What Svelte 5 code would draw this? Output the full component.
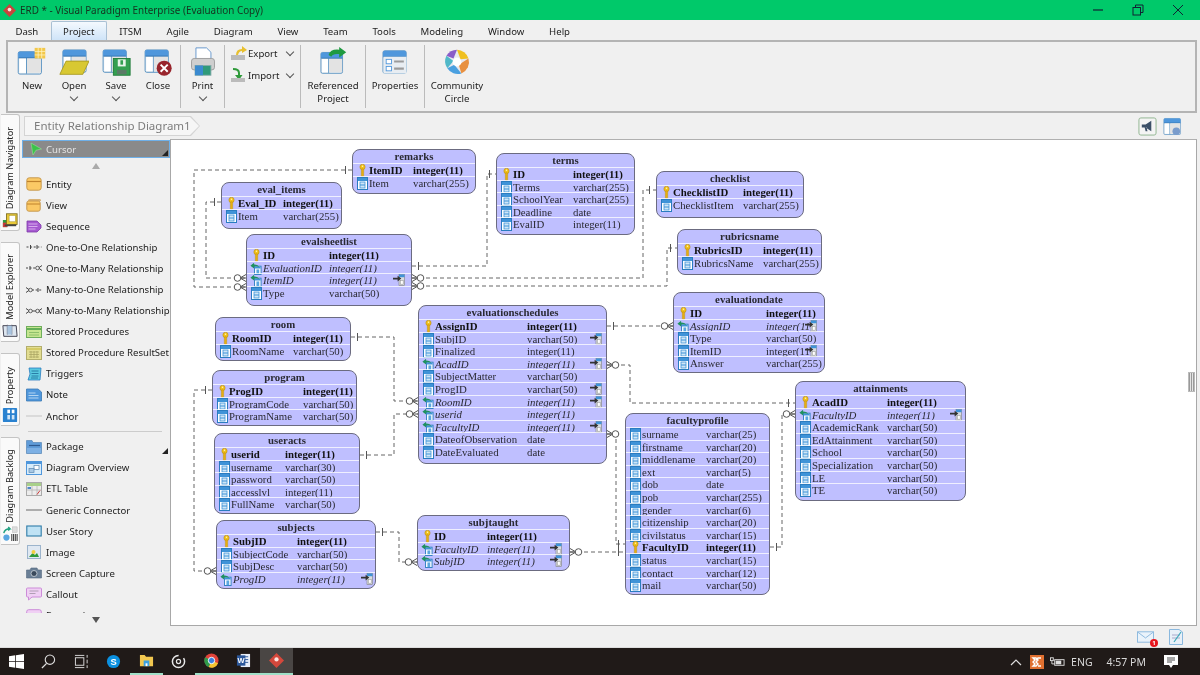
<script>
  const tabs = ['Dash','Project','ITSM','Agile','Diagram','View','Team','Tools','Modeling','Window','Help'];
  const P='k', F='f', C='c';
  const entities = [
    {n:'remarks',x:352,y:149,w:124,h:45,t:61,rows:[['ItemID','integer(11)',P],['Item','varchar(255)',C]]},
    {n:'eval_items',x:221,y:182,w:121,h:47,t:62,rows:[['Eval_ID','integer(11)',P],['Item','varchar(255)',C]]},
    {n:'evalsheetlist',x:246,y:234,w:166,h:72,t:83,ro:7,rows:[['ID','integer(11)',P],['EvaluationID','integer(11)',F],['ItemID','integer(11)',F,1],['Type','varchar(50)',C]]},
    {n:'terms',x:496,y:153,w:139,h:82,t:77,rows:[['ID','integer(11)',P],['Terms','varchar(255)',C],['SchoolYear','varchar(255)',C],['Deadline','date',C],['EvalID','integer(11)',C]]},
    {n:'checklist',x:656,y:171,w:148,h:47,t:87,rows:[['ChecklistID','integer(11)',P],['ChecklistItem','varchar(255)',C]]},
    {n:'rubricsname',x:677,y:229,w:145,h:46,t:86,rows:[['RubricsID','integer(11)',P],['RubricsName','varchar(255)',C]]},
    {n:'evaluationdate',x:673,y:292,w:152,h:81,t:93,ro:8,rows:[['ID','integer(11)',P],['AssignID','integer(11)',F,1],['Type','varchar(50)',C],['ItemID','integer(11)',C,1],['Answer','varchar(255)',C]]},
    {n:'evaluationschedules',x:418,y:305,w:189,h:159,t:109,ro:5,rows:[['AssignID','integer(11)',P],['SubjID','varchar(50)',C,1],['Finalized','integer(11)',C],['AcadID','integer(11)',F,1],['SubjectMatter','varchar(50)',C],['ProgID','varchar(50)',C,1],['RoomID','integer(11)',F,1],['userid','integer(11)',F],['FacultyID','integer(11)',F,1],['DateofObservation','date',C],['DateEvaluated','date',C]]},
    {n:'room',x:215,y:317,w:136,h:44,t:78,rows:[['RoomID','integer(11)',P],['RoomName','varchar(50)',C]]},
    {n:'program',x:212,y:370,w:145,h:56,t:91,rows:[['ProgID','integer(11)',P],['ProgramCode','varchar(50)',C],['ProgramName','varchar(50)',C]]},
    {n:'useracts',x:214,y:433,w:146,h:81,t:71,rows:[['userid','integer(11)',P],['username','varchar(30)',C],['password','varchar(50)',C],['accesslvl','integer(11)',C],['FullName','varchar(50)',C]]},
    {n:'subjects',x:216,y:520,w:160,h:69,t:81,ro:3,rows:[['SubjID','integer(11)',P],['SubjectCode','varchar(50)',C],['SubjDesc','varchar(50)',C],['ProgID','integer(11)',F,1]]},
    {n:'subjtaught',x:417,y:515,w:153,h:56,t:70,ro:8,rows:[['ID','integer(11)',P],['FacultyID','integer(11)',F,1],['SubjID','integer(11)',F,1]]},
    {n:'facultyprofile',x:625,y:413,w:145,h:182,t:81,rows:[['surname','varchar(25)',C],['firstname','varchar(20)',C],['middlename','varchar(20)',C],['ext','varchar(5)',C],['dob','date',C],['pob','varchar(255)',C],['gender','varchar(6)',C],['citizenship','varchar(20)',C],['civilstatus','varchar(15)',C],['FacultyID','integer(11)',P],['status','varchar(15)',C],['contact','varchar(12)',C],['mail','varchar(50)',C]]},
    {n:'attainments',x:795,y:381,w:171,h:120,t:92,ro:4,rows:[['AcadID','integer(11)',P],['FacultyID','integer(11)',F,1],['AcademicRank','varchar(50)',C],['EdAttainment','varchar(50)',C],['School','varchar(50)',C],['Specialization','varchar(50)',C],['LE','varchar(50)',C],['TE','varchar(50)',C]]}
  ];
  const links = [
    [[[352,170],[194,170],[194,287],[246,287]],1,'n'],
    [[[221,202],[206,202],[206,278],[246,278]],1,'n'],
    [[[412,266],[487,266],[487,174],[496,174]],1,1],
    [[[412,278],[643,278],[643,190],[656,190]],'n',1],
    [[[412,286],[667,286],[667,248],[677,248]],'n',1],
    [[[607,326],[673,326]],1,'n'],
    [[[607,365],[630,365],[630,403],[795,403]],'n',1],
    [[[607,434],[616,434],[616,544],[625,544]],'n',1],
    [[[570,552],[625,552]],'n',1],
    [[[770,547],[782,547],[782,414],[795,414]],1,'n'],
    [[[351,337],[394,337],[394,401],[418,401]],1,'n'],
    [[[360,455],[394,455],[394,414],[418,414]],1,'n'],
    [[[376,532],[399,532],[399,562],[417,562]],1,'n'],
    [[[212,390],[194,390],[194,571],[216,571]],1,'n']
  ];
  function marker(p,q,type){
    const l=Math.hypot(q[0]-p[0],q[1]-p[1])||1, dx=(q[0]-p[0])/l, dy=(q[1]-p[1])/l, nx=-dy, ny=dx;
    if(type===1){
      return {tick:`M${p[0]+6.5*dx+4*nx} ${p[1]+6.5*dy+4*ny}L${p[0]+6.5*dx-4*nx} ${p[1]+6.5*dy-4*ny}`};
    }
    const b=[p[0]+6*dx,p[1]+6*dy];
    return {cx:p[0]+8.5*dx,cy:p[1]+8.5*dy,tick:`M${p[0]+3.5*nx} ${p[1]+3.5*ny}L${b[0]} ${b[1]}L${p[0]-3.5*nx} ${p[1]-3.5*ny}M${p[0]} ${p[1]}L${b[0]} ${b[1]}`};
  }
  const paths = links.map(([pts,a,b])=>{
    const n=pts.length;
    return {d:'M'+pts.map(p=>p.join(' ')).join('L'),m:[marker(pts[0],pts[1],a),marker(pts[n-1],pts[n-2],b)]};
  });
  const pal1=[['entity','Entity'],['view','View'],['seq','Sequence'],['r11','One-to-One Relationship'],['r1n','One-to-Many Relationship'],['rn1','Many-to-One Relationship'],['rnn','Many-to-Many Relationship'],['sp','Stored Procedures'],['rs','Stored Procedure ResultSet'],['trig','Triggers'],['note','Note'],['anchor','Anchor']];
  const pal2=[['pkg','Package'],['ov','Diagram Overview'],['etl','ETL Table'],['gen','Generic Connector'],['story','User Story'],['img','Image'],['cam','Screen Capture'],['call','Callout'],['rect','Rectangle']];
  const rail=[['Diagram Navigator','t1','tall1'],['Model Explorer','t2','tall2'],['Property','t3','tall3'],['Diagram Backlog','t4','tall4']];
</script>

<svg class="defs" aria-hidden="true">
  <defs>
    <symbol id="col" viewBox="0 0 11 13"><rect x=".5" y=".5" width="10" height="12" fill="#fff" stroke="#2a7cc0"/><rect x="1" y="1" width="9" height="3" fill="#3f93d8"/><rect x="3" y="5" width="5" height="6" fill="#cfe6f7" stroke="#3f93d8" stroke-width=".8"/><path d="M3 8h5" stroke="#3f93d8"/></symbol>
    <symbol id="key" viewBox="0 0 11 14"><ellipse cx="5.5" cy="3.2" rx="2.8" ry="3" fill="#f2c21e" stroke="#b58a10" stroke-width=".6"/><rect x="4.2" y="5" width="2.6" height="8.5" rx="1" fill="#e6ae12" stroke="#b58a10" stroke-width=".4"/><circle cx="5.5" cy="2.4" r=".8" fill="#fff5b0"/></symbol>
    <symbol id="fk" viewBox="0 0 13 14"><rect x="5.5" y="4.5" width="7" height="9" fill="#fff" stroke="#2a7cc0"/><rect x="6" y="5" width="6" height="2" fill="#3f93d8"/><rect x="7.5" y="8" width="3" height="5" fill="#5aa6e0"/><path d="M1 4 L5 .8 V2.6 C8 2.6 10 3.4 10.5 6 C9 4.6 7.5 4.6 5 4.8 V7 Z" fill="#1f9160"/></symbol>
    <symbol id="ref" viewBox="0 0 13 13"><rect x="6.5" y=".5" width="6" height="12" fill="#d8dce0" stroke="#777" stroke-width=".6"/><rect x="6.5" y=".5" width="6" height="3" fill="#3f93d8"/><rect x="8" y="7" width="3" height="4" fill="#fff" stroke="#888" stroke-width=".5"/><path d="M0 4h5V1.8L9 5 5 8V6H0Z" fill="#333"/></symbol>

    <symbol id="win" viewBox="0 0 32 32"><rect x="1.5" y="2.5" width="28" height="27" rx="2" fill="#eef1f3" stroke="#3a7fb8"/><path d="M1.5 10V4.5a2 2 0 0 1 2-2h24a2 2 0 0 1 2 2V10Z" fill="#4f97dc"/><path d="M2 10h27" stroke="#2f6ea8"/><rect x="3" y="11" width="8" height="17" fill="#fff"/><path d="M11.5 10v19" stroke="#3a7fb8"/><rect x="12" y="11" width="17" height="17" fill="#e3e3e3"/></symbol>

    <symbol id="entity" viewBox="0 0 16 14"><rect x=".8" y=".8" width="14.4" height="12.4" rx="2.5" fill="#fbc965" stroke="#c79a52"/><path d="M1 4.5h14" stroke="#c0822c" stroke-width="1.2"/></symbol>
    <symbol id="view" viewBox="0 0 16 14"><path d="M2 3V2.5Q2 1 4 1H14Q15 1 15 3Z" fill="#d7b276"/><rect x=".8" y="3" width="13.4" height="10.2" rx="2" fill="#fbc965" stroke="#c79a52"/><path d="M1 6h13" stroke="#c0822c"/></symbol>
    <symbol id="seq" viewBox="0 0 16 14"><path d="M1 2H11L15 6V9L11 13H1Z" fill="#a65ad0" stroke="#7f3aa8" stroke-width=".8"/><path d="M2.5 5h9M2.5 7.5h9M2.5 10h7" stroke="#dcb8f0" stroke-width=".9"/></symbol>
    <symbol id="r11" viewBox="0 0 16 14"><path d="M.5 7h15" stroke="#444" stroke-dasharray="2 1.6"/><path d="M4.5 5v4M11 5v4" stroke="#444"/></symbol>
    <symbol id="r1n" viewBox="0 0 16 14"><path d="M0 7h10" stroke="#444" stroke-dasharray="2 1.6"/><path d="M4 5v4M16 4.5L12.5 7 16 9.5" stroke="#444" fill="none"/><circle cx="11.5" cy="7" r="1.8" fill="#f0f0f0" stroke="#444" stroke-width=".8"/></symbol>
    <symbol id="rn1" viewBox="0 0 16 14"><path d="M6 7h10" stroke="#444" stroke-dasharray="2 1.6"/><path d="M12 5v4M0 4.5L3.5 7 0 9.5" stroke="#444" fill="none"/><circle cx="4.5" cy="7" r="1.8" fill="#f0f0f0" stroke="#444" stroke-width=".8"/></symbol>
    <symbol id="rnn" viewBox="0 0 16 14"><path d="M5 7h6" stroke="#444"/><path d="M0 4.5L3.5 7 0 9.5M16 4.5L12.5 7 16 9.5" stroke="#444" fill="none"/><circle cx="4.5" cy="7" r="1.8" fill="#f0f0f0" stroke="#444" stroke-width=".8"/><circle cx="11.5" cy="7" r="1.8" fill="#f0f0f0" stroke="#444" stroke-width=".8"/></symbol>
    <symbol id="sp" viewBox="0 0 16 14"><rect x=".5" y="1.5" width="15" height="11" fill="#c5e58f" stroke="#6fae5c"/><path d="M1 4h14" stroke="#4aa04a" stroke-width="1.6"/><path d="M3 7.5h10M3 10h10" stroke="#8ec06c"/></symbol>
    <symbol id="rs" viewBox="0 0 16 14"><rect x=".5" y=".5" width="15" height="13" fill="#e2dd92" stroke="#b3ae6c"/><path d="M1 3h14" stroke="#d2c75a" stroke-width="1.6"/><path d="M3 6h10M3 8.5h10M3 11h10M5 5v7M8 5v7M11 5v7" stroke="#a8a060" stroke-width=".7"/></symbol>
    <symbol id="trig" viewBox="0 0 16 14"><path d="M3 1H15L14 13H2L4 7Z" fill="#58c8e0" stroke="#2a7cc0" stroke-width=".8"/><path d="M5.5 4h7M5.5 6.5h7M5.5 9h7M5 11h7" stroke="#1c6a98" stroke-width=".8"/></symbol>
    <symbol id="note" viewBox="0 0 16 14"><path d="M.5 1H12L15.5 4V13H.5Z" fill="#4f97dc" stroke="#3a78b4" stroke-width=".8"/><path d="M2.5 5h7M2.5 7.5h10M2.5 10h10" stroke="#cfe4f6" stroke-width=".8"/></symbol>
    <symbol id="anchor" viewBox="0 0 16 14"><path d="M.5 7h15" stroke="#999" stroke-dasharray="1 1"/></symbol>
    <symbol id="pkg" viewBox="0 0 16 14"><path d="M.5 .5H6L7 2.5H15.5V13.5H.5Z" fill="#5f9bd8" stroke="#4a7cb0" stroke-width=".6"/><path d="M3 5.5h11" stroke="#2f5a90" stroke-width="1.2"/><rect x="1" y="8" width="14" height="5" fill="#7db0e4"/></symbol>
    <symbol id="ov" viewBox="0 0 16 14"><rect x=".5" y=".5" width="15" height="13" fill="#d8ecfa" stroke="#4f97dc"/><path d="M1 2h14" stroke="#4f97dc" stroke-width="2"/><rect x="8" y="4.5" width="5" height="4" fill="#fff" stroke="#5d88b0" stroke-width=".7"/><rect x="3" y="7.5" width="5" height="4" fill="#a8c8e4" stroke="#5d88b0" stroke-width=".7"/></symbol>
    <symbol id="etl" viewBox="0 0 16 14"><rect x=".5" y=".5" width="15" height="13" fill="#ececec" stroke="#aaa"/><rect x="1" y="1" width="14" height="3" fill="#a8d08a"/><path d="M1 8h14M6 4v9M11 4v9" stroke="#b0b0b0" stroke-width=".7"/><rect x="1.5" y="5" width="3.5" height="2" fill="#4f88c8"/><path d="M11 12.5l3-4" stroke="#d04040"/></symbol>
    <symbol id="gen" viewBox="0 0 16 14"><path d="M0 7h16" stroke="#888" stroke-width="1.3"/></symbol>
    <symbol id="story" viewBox="0 0 16 14"><rect x=".8" y="2" width="14.4" height="10" fill="#bfe2f4" stroke="#2f7ca8" stroke-width="1.1"/></symbol>
    <symbol id="img" viewBox="0 0 16 14"><rect x="1.5" y=".5" width="13" height="13" fill="#dfe8f2" stroke="#9cb4cc"/><path d="M3 12l3.5-4 2.5 2 2-2 2 4Z" fill="#2f9a3a"/><circle cx="7.5" cy="7" r="2" fill="#f0d040"/></symbol>
    <symbol id="cam" viewBox="0 0 16 14"><path d="M.5 4H4L5 2H11L12 4H15.5V12H.5Z" fill="#6a7f96" stroke="#566a80" stroke-width=".6"/><circle cx="8" cy="7.5" r="3" fill="#3a4a5c" stroke="#d0d8e0" stroke-width=".8"/></symbol>
    <symbol id="call" viewBox="0 0 16 14"><path d="M1.5 1H14.5Q15.5 1 15.5 2V9Q15.5 10 14.5 10H6L2.5 13V10H1.5Q.5 10 .5 9V2Q.5 1 1.5 1Z" fill="#f0d0f4" stroke="#cc8cd8"/><path d="M3.5 4h9M3.5 6.5h6" stroke="#b0a0b4"/></symbol>
    <symbol id="rect" viewBox="0 0 16 14"><rect x=".7" y=".7" width="14.6" height="12.6" rx="2" fill="#f0d0f4" stroke="#cc8cd8"/></symbol>
    <symbol id="cursor" viewBox="0 0 14 14"><path d="M2 1L12.5 7 7 8.2 4 13Z" fill="#3cc24a" stroke="#9fe8a0" stroke-width=".5"/></symbol>
    <symbol id="tall1" viewBox="0 0 18 18"><rect x="1" y="9" width="5" height="8" fill="#2e9a3e"/><rect x="1" y="12" width="5" height="5" fill="#cc3a3a"/><rect x="5" y="2" width="12" height="12" fill="#e8c838" stroke="#807020"/><rect x="8" y="4" width="7" height="7" fill="#fff" stroke="#a09020" stroke-width=".5"/><path d="M3 15h13" stroke="#444" stroke-width="2"/></symbol>
    <symbol id="tall2" viewBox="0 0 18 18"><path d="M1 3H16L17 15H2Z" fill="#dde6f0" stroke="#334"/><path d="M6 2V13M11 2V13" stroke="#556"/><rect x="6" y="3" width="5" height="10" fill="#a8c4e0"/></symbol>
    <symbol id="tall3" viewBox="0 0 18 18"><rect x="1" y="1" width="16" height="16" rx="1" fill="#2a82d0"/><rect x="6" y="3" width="3" height="4" fill="#fff"/><rect x="11" y="3" width="3" height="4" fill="#fff"/><rect x="6" y="9" width="3" height="5" fill="#cfe4f6"/><rect x="11" y="9" width="3" height="5" fill="#cfe4f6"/></symbol>
    <symbol id="tall4" viewBox="0 0 18 18"><circle cx="5" cy="13" r="3.5" fill="#5aa6e0"/><path d="M2 8Q3 3 9 3L7 1M9 3L7 5" fill="none" stroke="#1fa080" stroke-width="1.6"/><path d="M11 9v8M13 9v8M15 9v8M17 9v8" stroke="#444" stroke-width="1.2"/><rect x="12" y="1" width="5" height="6" fill="#ddd" stroke="#aaa" stroke-width=".5"/></symbol>
  </defs>
</svg>

<div class="page">
  <header class="titlebar">
    <svg class="logo" viewBox="0 0 14 14"><path d="M7 0L14 7 7 14 0 7Z" fill="#c8443c"/><circle cx="7" cy="6" r="2" fill="#fbe4e0"/></svg>
    <span class="title">ERD * - Visual Paradigm Enterprise (Evaluation Copy)</span>
    <div class="winctl">
      <svg viewBox="0 0 12 12"><path d="M1 6h10" stroke="#123" stroke-width="1.2"/></svg>
      <svg viewBox="0 0 12 12"><path d="M3.5 3V1H11V8.5H9" fill="none" stroke="#123"/><rect x="1" y="3.5" width="7.5" height="7.5" fill="none" stroke="#123"/></svg>
      <svg viewBox="0 0 12 12"><path d="M1 1L11 11M11 1L1 11" stroke="#123"/></svg>
    </div>
  </header>

  <nav class="tabs">
    {#each tabs as t}<div class="tab" class:on={t==='Project'}>{t}</div>{/each}
  </nav>

  <section class="ribbon">
    <div class="grp g1">
      <div class="btn"><svg class="ri" viewBox="0 0 34 34"><use href="#win" x="0" y="3" width="30" height="30"/><rect x="20" y="1" width="12" height="12" fill="#f2c74a"/><path d="M24 1v12M28 1v12M20 5h12M20 9h12" stroke="#fff4c0" stroke-width=".9"/></svg><span>New</span></div>
      <div class="btn"><svg class="ri" viewBox="0 0 34 34"><use href="#win" x="3" y="1" width="30" height="30"/><path d="M8 16H34L27 31H1Z" fill="#d8c832" stroke="#a89a20"/></svg><span>Open</span><i class="chev"></i></div>
      <div class="btn"><svg class="ri" viewBox="0 0 34 34"><use href="#win" x="1" y="1" width="30" height="30"/><rect x="14" y="13" width="19" height="19" fill="#34a050" stroke="#1f7a38"/><rect x="19" y="14" width="9" height="8" fill="#e8f4ea"/><rect x="22" y="15" width="3" height="5" fill="#34a050"/><rect x="18" y="26" width="11" height="5" fill="#5a7a66"/></svg><span>Save</span><i class="chev"></i></div>
      <div class="btn"><svg class="ri" viewBox="0 0 34 34"><use href="#win" x="1" y="1" width="30" height="30"/><circle cx="24" cy="24" r="8.5" fill="#98242c"/><path d="M20 20L28 28M28 20L20 28" stroke="#fff" stroke-width="2.2"/></svg><span>Close</span></div>
    </div>
    <div class="grp g2">
      <div class="btn"><svg class="ri" viewBox="0 0 34 34"><path d="M9 1H21L26 6V14H9Z" fill="#fff" stroke="#5a90c8"/><rect x="4" y="13" width="26" height="13" rx="3" fill="#cfcfcf" stroke="#999"/><rect x="8" y="21" width="18" height="11" fill="#2f9a7a" stroke="#8aa"/><rect x="8" y="21" width="9" height="11" fill="#3a8ad0"/></svg><span>Print</span><i class="chev"></i></div>
    </div>
    <div class="grp g3">
      <div class="iorow"><svg class="mi" viewBox="0 0 16 16"><path d="M5 10Q5 4 11 4V1L16 5 11 8V6Q8 6 7 10Z" fill="#e8c030"/><rect x="0" y="10" width="14" height="5" fill="#bbb"/></svg><span>Export</span><i class="chev ch2"></i></div>
      <div class="iorow"><svg class="mi" viewBox="0 0 16 16"><path d="M2 1Q9 1 9 6V8H11.5L8 13 4 8H7V6Q7 3 2 3Z" fill="#2f9a3a"/><rect x="0" y="11" width="14" height="4" fill="#bbb"/></svg><span>Import</span><i class="chev ch2"></i></div>
    </div>
    <div class="grp g4">
      <div class="btn two"><svg class="ri" viewBox="0 0 34 34"><use href="#win" x="2" y="4" width="28" height="28"/><path d="M12 9Q14 2 24 3V0L32 6 24 12V8Q17 7 15 11Z" fill="#1f9a40"/></svg><span>Referenced<br>Project</span></div>
    </div>
    <div class="grp g5">
      <div class="btn two"><svg class="ri" viewBox="0 0 34 34"><use href="#win" x="2" y="2" width="30" height="30"/><rect x="4" y="11" width="26" height="19" fill="#e8edf2"/><rect x="7" y="14" width="6" height="5" fill="#fff" stroke="#4f97dc"/><rect x="7" y="22" width="6" height="5" fill="#fff" stroke="#4f97dc"/><path d="M16 16.5h11M16 24.5h11" stroke="#9a9a9a" stroke-width="2.4"/></svg><span>Properties</span></div>
    </div>
    <div class="grp g6">
      <div class="btn two"><svg class="ri" viewBox="0 0 34 34"><circle cx="17" cy="17" r="13" fill="#e8e8ee"/><path d="M17 3A14 14 0 0 0 5 10L13 13Z" fill="#8a5cc8"/><path d="M17 3A14 14 0 0 1 30 13L21 14Z" fill="#f0c020"/><path d="M30 13A14 14 0 0 1 22 30L19 20Z" fill="#e89040"/><path d="M22 30A14 14 0 0 1 6 24L14 20Z" fill="#4aa0e0"/><path d="M6 24A14 14 0 0 1 5 10L13 16Z" fill="#50b8c8"/><circle cx="17" cy="17" r="5" fill="#fff"/></svg><span>Community<br>Circle</span></div>
    </div>
  </section>

  <div class="body">
    <aside class="rail">
      {#each rail as r}
        <div class="rtab {r[1]}"><span class="vtext">{r[0]}</span><svg class="ricon"><use href="#{r[2]}"/></svg></div>
      {/each}
    </aside>

    <div class="work">
      <div class="crumbrow">
        <div class="crumb"><span>Entity Relationship Diagram1</span></div>
        <div class="crumbicons">
          <svg class="ci" viewBox="0 0 20 20"><rect x="1" y="1" width="18" height="18" rx="2" fill="#f4f4f4" stroke="#8fb58f"/><path d="M4 8H8L14 4V15L8 11H4ZM7 11l1 4h2l-1-4Z" fill="#3c5068"/></svg>
          <svg class="ci" viewBox="0 0 20 20"><use href="#win" x="0" y="0" width="20" height="20"/><circle cx="14" cy="15" r="4" fill="#7a9ccc"/></svg>
        </div>
      </div>
      <div class="main">
        <div class="palette">
          <div class="cursor"><svg class="pi"><use href="#cursor"/></svg><span>Cursor</span><i class="corner"></i></div>
          <div class="arrow up"></div>
          <div class="plist">
            {#each pal1 as p}<div class="pitem"><svg class="pi"><use href="#{p[0]}"/></svg><span>{p[1]}</span></div>{/each}
            <div class="psep"></div>
            {#each pal2 as p, i}<div class="pitem"><svg class="pi"><use href="#{p[0]}"/></svg><span>{p[1]}</span>{#if i===0}<i class="corner dark"></i>{/if}</div>{/each}
          </div>
          <div class="arrow down"></div>
        </div>

        <div class="canvas">
          <svg class="wires" viewBox="170 139 1027 487">
            {#each paths as p}
              <path d={p.d} class="wire"/>
              {#each p.m as m}
                <path d={m.tick} class="mark"/>
                {#if m.cx}<circle cx={m.cx} cy={m.cy} r="3.3" class="ring"/>{/if}
              {/each}
            {/each}
          </svg>
          {#each entities as e}
            <div class="entity" style="left:{e.x-171}px;top:{e.y-140}px;width:{e.w}px;height:{e.h}px">
              <div class="ename">{e.n}</div>
              {#each e.rows as r}
                <div class="row" class:pk={r[2]==='k'} class:fk={r[2]==='f'} style="grid-template-columns:{e.t-17}px 1fr">
                  <svg class="rowicon" class:wide={r[2]==='f'}><use href={r[2]==='k'?'#key':r[2]==='f'?'#fk':'#col'}/></svg>
                  <span>{r[0]}</span><span>{r[1]}</span>
                  {#if r[3]}<svg class="refi" style="right:{e.ro-1}px"><use href="#ref"/></svg>{/if}
                </div>
              {/each}
            </div>
          {/each}
          <div class="grip"></div>
        </div>
      </div>
    </div>
  </div>

  <footer class="status">
    <div class="mail">
      <svg class="sti" viewBox="0 0 18 12"><rect x=".5" y=".5" width="17" height="11" fill="#eaf3fb" stroke="#8ab8de"/><path d="M1 1l8 6 8-6" fill="none" stroke="#8ab8de"/></svg>
      <b class="badge">1</b>
    </div>
    <svg class="sti2" viewBox="0 0 14 16"><path d="M.5 .5H10L13.5 3V15.5H.5Z" fill="#e8f0f8" stroke="#8ab8de"/><path d="M3 6h8M3 9h8" stroke="#aac"/><path d="M5 13L12 3" stroke="#3aa8b8" stroke-width="1.2"/></svg>
  </footer>

  <div class="taskbar">
    <div class="tleft">
      <div class="tb"><svg class="tw" viewBox="0 0 16 16"><path d="M0 2.3L6.6 1.4V7.6H0ZM7.4 1.3L16 0V7.6H7.4ZM0 8.4H6.6V14.6L0 13.7ZM7.4 8.4H16V16L7.4 14.7Z" fill="#fff"/></svg></div>
      <div class="tb"><svg class="tw" viewBox="0 0 16 16"><circle cx="9.5" cy="6" r="5" fill="none" stroke="#ddd" stroke-width="1.2"/><path d="M6 10L1 15" stroke="#ddd" stroke-width="1.4"/></svg></div>
      <div class="tb"><svg class="tw" viewBox="0 0 16 16"><rect x="1.5" y="4" width="9" height="8" fill="none" stroke="#ddd"/><path d="M1 1.5h10M1 14.5h10M14 1v3M14 6v4M14 12v3" stroke="#ddd"/></svg></div>
      <div class="tb"><svg class="tw" viewBox="0 0 16 16"><circle cx="8" cy="8" r="7" fill="#0a90e0"/><text x="8" y="11.5" class="sk">S</text></svg></div>
      <div class="tb run"><svg class="tw" viewBox="0 0 16 16"><path d="M1 2H6L7.5 4H15V14H1Z" fill="#f2c850"/><rect x="5" y="8" width="6" height="6" fill="#3aa0e0"/><rect x="7" y="11" width="2" height="3" fill="#fff"/></svg></div>
      <div class="tb"><svg class="tw" viewBox="0 0 16 16"><circle cx="8" cy="8" r="6.5" fill="none" stroke="#e8e8e8" stroke-width="1.6" stroke-dasharray="30 6"/><circle cx="8" cy="8" r="2.2" fill="none" stroke="#e8e8e8" stroke-width="1.3"/></svg></div>
      <div class="tb run"><svg class="tw" viewBox="0 0 16 16"><circle cx="8" cy="8" r="7.5" fill="#e0433a"/><path d="M8 8L15 11A7.5 7.5 0 0 1 5 15Z" fill="#f4c430"/><path d="M8 8L5 15A7.5 7.5 0 0 1 1.2 4.5Z" fill="#2f9a4a"/><circle cx="8" cy="8" r="3.4" fill="#3a80e0" stroke="#fff" stroke-width="1"/></svg></div>
      <div class="tb run"><svg class="tw" viewBox="0 0 16 16"><rect x="5" y="1" width="10" height="14" fill="#e8eef8"/><path d="M8 4h5M8 7h5M8 10h5" stroke="#2b579a"/><rect x="1" y="2.5" width="9" height="11" fill="#2b579a"/><text x="5.5" y="11" class="wd">W</text></svg></div>
      <div class="tb run act"><svg class="tw" viewBox="0 0 14 14"><path d="M7 0L14 7 7 14 0 7Z" fill="#d4483c"/><circle cx="7" cy="6" r="2" fill="#fbe4e0"/></svg></div>
    </div>
    <div class="tray">
      <svg class="caret" viewBox="0 0 12 8"><path d="M1 7L6 2 11 7" fill="none" stroke="#ddd" stroke-width="1.2"/></svg>
      <svg class="xam" viewBox="0 0 14 14"><rect width="14" height="14" fill="#e07030"/><path d="M3 3H6L8 5 6 7 8 9 6 11H3L5 9 3 7 5 5ZM11 3H8L6 5M11 11H8" fill="none" stroke="#fff" stroke-width="1.4"/></svg>
      <svg class="net" viewBox="0 0 16 10"><rect x="5" y="2.5" width="10" height="6" fill="none" stroke="#ddd"/><rect x="6" y="3.5" width="6" height="4" fill="#ddd"/><rect x=".5" y=".5" width="3" height="3" fill="none" stroke="#ddd"/><path d="M2 4v3h3" stroke="#ddd" fill="none"/></svg>
      <span class="eng">ENG</span>
      <span class="clock">4:57 PM</span>
      <svg class="notif" viewBox="0 0 14 14"><path d="M0 0H14V10H9L7 13 5 10H0Z" fill="#fff"/><path d="M3 3h8M3 5h8M3 7h5" stroke="#222" stroke-width=".8"/></svg>
    </div>
  </div>
</div>

<style>
  :global(body){margin:0;background:#f0f0f0}
  .defs{position:absolute;width:0;height:0}
  .page{width:1200px;height:675px;display:flex;flex-direction:column;overflow:hidden;font-family:"Noto Sans",sans-serif;font-size:9.6px;color:#222;background:#f0f0f0;filter:blur(.3px)}
  .titlebar{height:20px;background:#00c96a;display:flex;align-items:center;padding-left:3px;flex:none}
  .logo{width:13px;height:13px;margin-right:4px}
  .title{font-size:9.9px;color:#16321f}
  .winctl{margin-left:auto;display:flex;gap:28px;padding-right:16px}
  .winctl svg{width:12px;height:12px}
  .tabs{height:20px;display:flex;align-items:flex-end;flex:none;padding-left:3px}
  .tab{padding:0 11.4px;height:19px;line-height:20px;box-sizing:border-box;border:1px solid transparent;border-bottom:0;font-size:9.6px}
  .tab.on{background:linear-gradient(#f4f9fe,#cfe4f8);border-color:#a9c0d4;border-radius:2px 2px 0 0}
  .ribbon{margin:0 3px 0 6px;height:73px;box-sizing:border-box;border:2px solid #b4b4b4;display:flex;flex:none;background:#f0f0f0;padding:3px 0}
  .grp{border-right:1px solid #bbb;display:flex;box-sizing:border-box}
  .g1{width:173px;padding-left:3px}
  .g2{width:44px;justify-content:center}
  .g3{width:76px;flex-direction:column;padding:0 0 0 6px;gap:6px}
  .g4{width:65px;justify-content:center}
  .g5{width:59px;justify-content:center}
  .g6{width:64px;border:0;justify-content:center}
  .btn{width:42px;display:flex;flex-direction:column;align-items:center;line-height:13px;text-align:center;white-space:nowrap}
  .btn.two{width:auto}
  .btn span{margin-top:2px}
  .ri{width:30px;height:30px;flex:none;margin-top:2px}
  .chev{display:block;width:5px;height:5px;border:solid #555;border-width:0 1px 1px 0;transform:rotate(45deg);margin-top:2px}
  .iorow{display:flex;align-items:center;height:16px}
  .mi{width:16px;height:16px;margin-right:1px}
  .ch2{margin:-3px 0 0 6px}
  .iorow span{width:33px}
  .body{flex:1;display:flex;min-height:0}
  .rail{width:22px;flex:none;display:flex;flex-direction:column;align-items:flex-start;padding-top:1px;gap:11px;box-sizing:border-box}
  .rtab{width:19px;margin-left:1px;border:1px solid #c4c4c4;border-left:0;border-radius:0 3px 3px 0;background:#fafafa;display:flex;flex-direction:column;align-items:center;justify-content:flex-end;box-sizing:border-box;padding-bottom:2px}
  .t1{height:117px}.t2{height:100px}.t3{height:73px}.t4{height:108px}
  .vtext{writing-mode:vertical-rl;transform:rotate(180deg);white-space:nowrap;font-size:9.2px;line-height:16px;margin-bottom:3px}
  .ricon{width:16px;height:16px;flex:none}
  .work{flex:1;display:flex;flex-direction:column;min-width:0}
  .crumbrow{height:26px;display:flex;align-items:center;padding:0 18px 0 2px;flex:none}
  .crumb{height:20px;width:176px;background:#d4d4d4;clip-path:polygon(0 0,calc(100% - 9px) 0,100% 50%,calc(100% - 9px) 100%,0 100%);box-sizing:border-box;padding:1px}
  .crumb span{display:block;height:18px;line-height:18px;padding-left:9px;font-size:11.5px;color:#7d7d7d;background:#f6f6f6;white-space:nowrap;clip-path:polygon(0 0,calc(100% - 9px) 0,100% 50%,calc(100% - 9px) 100%,0 100%)}
  .crumbicons{margin-left:auto;display:flex;gap:6px;align-items:center}
  .ci{width:19px;height:19px}
  .main{flex:1;display:flex;min-height:0;padding-right:3px}
  .palette{width:148px;flex:none;display:flex;flex-direction:column;box-sizing:border-box;height:487px}
  .cursor{height:18px;background:#8a8a8a;color:#e4e4e4;box-sizing:border-box;border:1px solid #6fb0e8;display:flex;align-items:center;padding-left:6px;position:relative;flex:none;margin-top:1px}
  .corner{position:absolute;right:1px;bottom:1px;width:0;height:0;border:solid transparent;border-width:0 0 6px 6px;border-bottom-color:#222}
  .corner.dark{right:2px;bottom:3px}
  .pi{width:16px;height:14px;flex:none;margin-right:4px}
  .cursor .pi{width:14px;margin-right:3px}
  .arrow{height:15.5px;flex:none;display:flex;align-items:center;justify-content:center}
  .arrow::before{content:"";border:solid transparent;border-width:0 4px 6px}
  .up::before{border-bottom-color:#aaa}
  .down{height:13px}
  .down::before{border-width:6px 4px 0;border-top-color:#555}
  .plist{flex:1;overflow:hidden;min-height:0;padding-left:4px}
  .pitem{height:21.1px;display:flex;align-items:center;white-space:nowrap;position:relative}
  .psep{height:1px;background:#ccc;margin:4px 8px 4.6px 2px}
  .canvas{flex:1;position:relative;background:#fff;border:1px solid #a8a8a8;border-top-color:#b0b0b0;box-sizing:border-box;height:487px;overflow:hidden}
  .wires{position:absolute;left:-1px;top:-1px;width:1027px;height:487px}
  .wire{fill:none;stroke:#666;stroke-dasharray:4 3}
  .mark{fill:none;stroke:#555}
  .ring{fill:#fff;stroke:#555}
  .entity{position:absolute;box-sizing:border-box;background:#bfbfff;border:1px solid #6b6b80;border-radius:8px;font-family:"Liberation Serif",serif;font-size:10.8px;color:#2a2a33;overflow:hidden}
  .ename{height:14px;line-height:12px;text-align:center;font-weight:700}
  .row{height:12.6px;line-height:12.6px;display:grid;position:relative;box-shadow:0 -1px 0 rgba(255,255,255,.75);padding-left:16px;white-space:nowrap}
  .pk{font-weight:700;color:#111}
  .fk{font-style:italic}
  .rowicon{position:absolute;left:4px;top:0;width:11px;height:13px}
  .rowicon.wide{left:2px;width:13px}
  .refi{position:absolute;top:0;width:12px;height:12px}
  .grip{position:absolute;right:1px;top:232px;width:7px;height:20px;background:repeating-linear-gradient(90deg,#999 0 1px,#e4e4e4 1px 2px);border:1px solid #bbb;box-sizing:border-box}
  .status{height:21px;flex:none;display:flex;justify-content:flex-end;align-items:center;gap:15px;padding-right:17px;box-sizing:border-box;border-bottom:1px solid #ddd}
  .mail{position:relative;width:17px;height:12px}
  .sti{width:17px;height:12px;display:block}
  .badge{position:absolute;right:-4px;bottom:-4px;width:8px;height:8px;border-radius:50%;background:#e8141c;color:#fff;font-size:6px;line-height:8px;text-align:center}
  .sti2{width:14px;height:16px}
  .taskbar{height:27px;flex:none;background:#201a18;display:flex;align-items:center;justify-content:space-between}
  .tleft{display:flex;height:100%}
  .tb{width:32.5px;display:flex;align-items:center;justify-content:center;box-sizing:border-box;height:100%}
  .run{border-bottom:2px solid #9fe0c8}
  .act{background:#4a4644}
  .tw{width:15px;height:15px}
  .sk{font:700 10px "Liberation Sans",sans-serif;fill:#fff;text-anchor:middle}
  .wd{font:700 8px "Liberation Sans",sans-serif;fill:#fff;text-anchor:middle}
  .tray{display:flex;align-items:center;color:#d8d8d8;font-size:10.5px;height:100%;padding-right:22px}
  .caret{width:12px;height:8px;margin-right:8px}
  .xam{width:14px;height:14px;margin-right:6px}
  .net{width:15px;height:10px;margin-right:6px}
  .eng{margin-right:14px}
  .clock{margin-right:18px}
  .notif{width:14px;height:14px}
</style>
